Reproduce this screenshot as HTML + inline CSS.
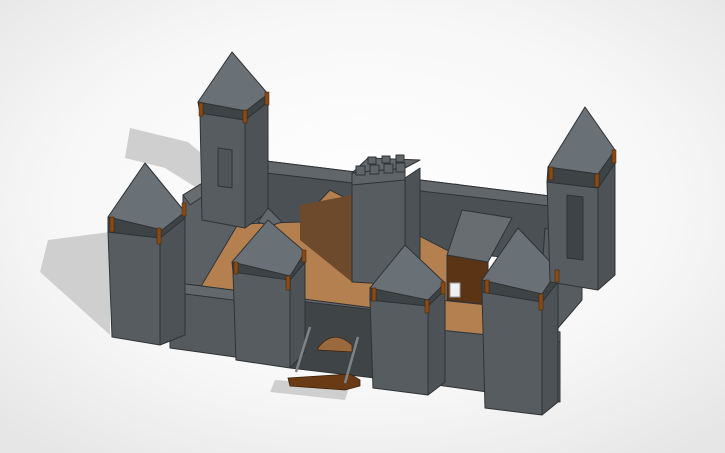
<!DOCTYPE html>
<html><head><style>
html,body{margin:0;padding:0;width:725px;height:453px;overflow:hidden;background:#f3f3f3}
svg{display:block}
</style></head><body>
<svg width="725" height="453" viewBox="0 0 725 453" xmlns="http://www.w3.org/2000/svg">
<defs>
<radialGradient id="bg" cx="0.5" cy="0.45" r="0.7">
<stop offset="0" stop-color="#ffffff"/><stop offset="0.6" stop-color="#f7f7f7"/><stop offset="1" stop-color="#e6e6e6"/>
</radialGradient>
</defs>
<rect width="725" height="453" fill="url(#bg)"/>
<!-- shadows -->
<g fill="#cfcfcf">
<polygon points="130,128 188,142 200,152 200,190 165,168 125,158"/>
<polygon points="48,240 110,232 110,335 40,272"/>
<polygon points="455,183 520,198 540,215 500,212 455,205"/>
<polygon points="275,380 350,385 345,400 270,392"/>
</g>
<g stroke="#2f3336" stroke-width="1" stroke-linejoin="round">
<!-- back wall -->
<polygon points="258,160 550,196 550,262 258,232" fill="#4a5054"/>
<polygon points="258,160 550,196 550,206 258,172" fill="#60666a"/>
<!-- left wall -->
<polygon points="183,195 243,158 262,172 262,290 183,290" fill="#5a6064"/>
<polygon points="183,195 243,158 250,165 190,205" fill="#666c70"/>
<!-- floor -->
<polygon points="238,224 300,222 330,190 470,262 470,335 300,305 200,288" fill="#b5804f"/>
<polygon points="300,205 352,195 352,282 300,240" fill="#6e4a2c" stroke="none"/>
<!-- right wall -->
<polygon points="545,228 582,242 582,300 552,335 540,300" fill="#565c60"/>
<!-- front wall -->
<polygon points="170,282 560,332 560,402 170,348" fill="#545a5e"/>
<polygon points="170,282 560,332 560,342 170,292" fill="#62686c"/>
<polygon points="290,300 375,310 375,378 290,368" fill="#3f4447"/>
<!-- building -->
<polygon points="447,255 488,262 488,305 447,300" fill="#5a3414"/>
<polygon points="447,255 462,210 512,218 488,262" fill="#676d71"/>
<rect x="450" y="283" width="10" height="14" fill="#f0f0f0" stroke="#999"/>
<polygon points="440,300 488,305 488,335 440,330" fill="#b5804f"/>
<!-- central keep -->
<polygon points="352,183 405,178 405,285 352,282" fill="#565c60"/>
<polygon points="405,178 420,168 420,270 405,285" fill="#4c5256"/>
<polygon points="352,173 405,168 420,160 368,158" fill="#62686c"/>
<polygon points="352,173 405,168 405,180 352,185" fill="#5e6468"/>
<g fill="#5e6468"><rect x="356" y="166" width="9" height="9"/><rect x="370" y="165" width="9" height="9"/><rect x="384" y="164" width="9" height="9"/><rect x="396" y="163" width="9" height="9"/><rect x="368" y="157" width="8" height="7"/><rect x="382" y="156" width="8" height="7"/><rect x="396" y="155" width="8" height="7"/></g>
</g>
<!-- towers -->
<g stroke="#2f3336" stroke-width="1" stroke-linejoin="round">
<!-- A -->
<polygon points="108,232 160,238 160,345 112,337" fill="#565c60"/>
<polygon points="160,238 185,218 185,335 160,345" fill="#4c5256"/>
<polygon points="108,217 162,230 185,212 185,218 160,238 108,232" fill="#3e4346"/>
<polygon points="108,217 162,230 185,212 145,163" fill="#6a7176"/>
<!-- B -->
<polygon points="200,113 245,120 245,228 202,220" fill="#565c60"/>
<polygon points="245,120 268,102 268,212 245,228" fill="#4c5256"/>
<polygon points="198,102 246,111 268,94 268,102 245,120 200,113" fill="#3e4346"/>
<polygon points="218,148 232,150 232,188 218,186" fill="#4e5458"/>
<polygon points="198,102 246,111 268,94 232,52" fill="#6a7176"/>
<!-- C -->
<polygon points="233,272 290,280 290,368 236,360" fill="#565c60"/>
<polygon points="290,280 305,262 305,352 290,368" fill="#4c5256"/>
<polygon points="258,222 268,208 282,222 270,226" fill="#62686c"/>
<polygon points="232,262 290,276 305,252 305,262 290,280 233,272" fill="#3e4346"/>
<polygon points="232,262 290,276 305,252 268,220" fill="#6a7176"/>
<!-- D -->
<polygon points="370,300 428,306 428,395 373,388" fill="#565c60"/>
<polygon points="428,306 445,290 445,382 428,395" fill="#4c5256"/>
<polygon points="370,288 428,300 445,283 445,290 428,306 370,300" fill="#3e4346"/>
<polygon points="370,288 428,300 445,283 405,245" fill="#6a7176"/>
<!-- E -->
<polygon points="482,292 542,302 542,415 485,408" fill="#565c60"/>
<polygon points="542,302 558,282 558,402 542,415" fill="#4c5256"/>
<polygon points="482,280 542,294 558,270 558,282 542,302 482,292" fill="#3e4346"/>
<polygon points="482,280 542,294 558,270 518,228" fill="#6a7176"/>
<!-- F -->
<polygon points="547,182 598,188 598,290 550,282" fill="#565c60"/>
<polygon points="598,188 615,163 615,275 598,290" fill="#4c5256"/>
<polygon points="548,167 598,174 615,150 615,163 598,188 547,182" fill="#3e4346"/>
<polygon points="567,195 583,197 583,260 567,258" fill="#3e4346"/>
<polygon points="548,167 598,174 615,150 585,107" fill="#6a7176"/>
</g>
<!-- posts -->
<g fill="#8a4a14" stroke="#3a2008" stroke-width="0.5">
<rect x="110" y="217" width="4" height="15"/><rect x="157" y="228" width="4" height="16"/><rect x="182" y="203" width="4" height="13"/>
<rect x="199" y="103" width="4" height="13"/><rect x="243" y="110" width="4" height="13"/><rect x="265" y="92" width="4" height="13"/>
<rect x="234" y="262" width="4" height="12"/><rect x="286" y="276" width="4" height="14"/><rect x="302" y="250" width="4" height="12"/>
<rect x="372" y="288" width="4" height="13"/><rect x="425" y="300" width="4" height="13"/><rect x="441" y="282" width="4" height="12"/>
<rect x="485" y="280" width="4" height="13"/><rect x="539" y="294" width="4" height="16"/><rect x="555" y="270" width="4" height="12"/>
<rect x="549" y="167" width="4" height="13"/><rect x="595" y="174" width="4" height="13"/><rect x="612" y="150" width="4" height="13"/>
</g>
<!-- drawbridge -->
<path d="M318,348 Q333,328 352,345 L352,352 L318,350Z" fill="#9a6a3e" stroke="#3a2008" stroke-width="0.7"/>
<polygon points="288,378 350,374 360,380 360,386 345,390 290,386" fill="#6a3a14" stroke="#3a2008" stroke-width="0.8"/>
<g stroke="#7d8488" stroke-width="2.5"><line x1="310" y1="327" x2="296" y2="372"/><line x1="358" y1="337" x2="345" y2="383"/></g>
</svg>
</body></html>
